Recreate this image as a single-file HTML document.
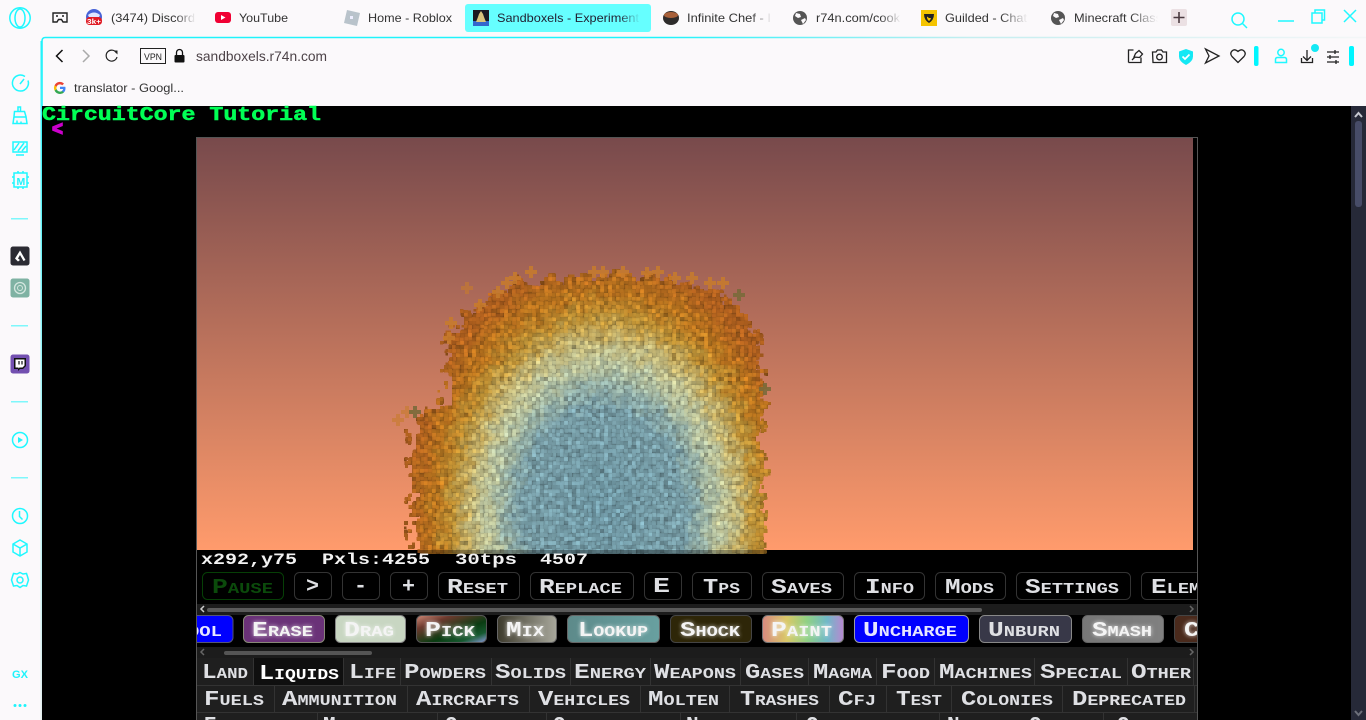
<!DOCTYPE html>
<html><head><meta charset="utf-8"><title>Sandboxels</title>
<style>
html,body{margin:0;padding:0;width:1366px;height:720px;overflow:hidden;background:#fbf9fb}
svg{display:block;position:absolute;left:0;top:0}
.t{font:12px "Liberation Sans",sans-serif;fill:#333}
.g{font-family:"Liberation Mono",monospace;font-weight:bold;font-size:21px;font-variant:small-caps;fill:#dfe0e4}
.w{fill:#f4f4f4;filter:drop-shadow(0 0 2px rgba(255,255,255,.75))}
.s{font-family:"Liberation Mono",monospace;font-weight:bold;font-size:16px;fill:#f2f2f2}
.c{fill:none;stroke:#1ff8ff;stroke-width:1.5}
.k{fill:none;stroke:#222;stroke-width:1.3}
.b{fill:#000;stroke:#333;stroke-width:1}
.d{fill:#333}
</style></head><body>
<svg width="1366" height="720" viewBox="0 0 1366 720" xmlns="http://www.w3.org/2000/svg">
<defs>
<linearGradient id="sky" x1="0" y1="0" x2="0" y2="1"><stop offset="0" stop-color="#784a4c"/><stop offset="1" stop-color="#ff9b6c"/></linearGradient>
<linearGradient id="top" x1="0" y1="0" x2="1" y2="0"><stop offset="0" stop-color="#1ff3fb"/><stop offset=".47" stop-color="#1ff3fb"/><stop offset=".7" stop-color="#c4eef0"/><stop offset="1" stop-color="#f4f6f7"/></linearGradient>
<linearGradient id="lft" x1="0" y1="0" x2="0" y2="1"><stop offset="0" stop-color="#1ff3fb"/><stop offset=".5" stop-color="#9ff3f6"/><stop offset="1" stop-color="#e4eeee"/></linearGradient>
<linearGradient id="f"><stop offset="0" stop-color="#fbf9fb" stop-opacity="0"/><stop offset="1" stop-color="#fbf9fb"/></linearGradient>
<linearGradient id="fa"><stop offset="0" stop-color="#66ffff" stop-opacity="0"/><stop offset="1" stop-color="#66ffff"/></linearGradient>
<linearGradient id="pick" x1="0" y1="0" x2="1" y2="1"><stop offset="0" stop-color="#d08a78"/><stop offset=".25" stop-color="#6d3a2e"/><stop offset=".6" stop-color="#0a3c12"/><stop offset=".8" stop-color="#165a30"/><stop offset="1" stop-color="#8f9be0"/></linearGradient>
<linearGradient id="mix"><stop offset="0" stop-color="#3d3a2c"/><stop offset="1" stop-color="#a8a89c"/></linearGradient>
<linearGradient id="lk"><stop offset="0" stop-color="#5d8a8a"/><stop offset="1" stop-color="#68a0a0"/></linearGradient>
<linearGradient id="paint" x1="0" y1="0" x2="1" y2="0"><stop offset="0" stop-color="#d88a80"/><stop offset=".3" stop-color="#d9c868"/><stop offset=".55" stop-color="#8fd084"/><stop offset=".8" stop-color="#70b8c8"/><stop offset="1" stop-color="#b888d0"/></linearGradient>
<linearGradient id="sm"><stop offset="0" stop-color="#777"/><stop offset="1" stop-color="#808080"/></linearGradient>
<radialGradient id="bg" gradientUnits="userSpaceOnUse" cx="0" cy="0" r="1" gradientTransform="translate(604 512) scale(195 250)">
<stop offset="0" stop-color="#78a4b2"/><stop offset=".42" stop-color="#80a8b2"/><stop offset=".5" stop-color="#9cb9b0"/><stop offset=".6" stop-color="#c9d1a6"/><stop offset=".68" stop-color="#cfc27e"/><stop offset=".78" stop-color="#c99a38"/><stop offset=".88" stop-color="#c57c20"/><stop offset="1" stop-color="#bb6620"/></radialGradient>
<filter id="px" filterUnits="userSpaceOnUse" primitiveUnits="userSpaceOnUse" x="380" y="250" width="412" height="320" color-interpolation-filters="sRGB">
<feTurbulence type="fractalNoise" baseFrequency=".09" numOctaves="3" seed="4" result="t"/>
<feDisplacementMap in="SourceGraphic" in2="t" scale="30" xChannelSelector="R" yChannelSelector="G" result="d"/>
<feComponentTransfer in="d" result="d2"><feFuncA type="discrete" tableValues="0 1"/></feComponentTransfer>
<feTurbulence type="fractalNoise" baseFrequency=".22" numOctaves="2" seed="9"/>
<feColorMatrix values="1 0 0 0 0 1 0 0 0 0 1 0 0 0 0 0 0 0 0 1" result="n"/>
<feComposite in="d2" in2="n" operator="arithmetic" k1=".8" k2=".48" k3="0" k4="0" result="m"/>
<feFlood x="381" y="250" width="2" height="2" flood-color="#000"/>
<feComposite x="381" y="250" width="4" height="4"/>
<feTile x="380" y="250" width="412" height="320" result="a"/>
<feComposite in="m" in2="a" operator="in"/>
<feMorphology operator="dilate" radius="1"/>
</filter>
<clipPath id="cb"><rect x="197" y="138" width="996" height="416"/></clipPath>
<clipPath id="game"><rect x="197" y="100" width="1000" height="620"/></clipPath>
<path id="pl" d="M-2-6h4v4h4v4h-4v4h-4v-4h-4v-4h4z"/>
</defs>

<rect width="1366" height="720" fill="#fbf9fb"/>

<!-- window chrome left logo -->
<circle cx="20" cy="18" r="10.2" class="c"/><ellipse cx="20" cy="18" rx="5" ry="9" class="c"/>

<!-- tabs -->
<rect x="465" y="4" width="186" height="28" rx="3" fill="#66ffff"/>
<g fill="none" stroke="#222" stroke-width="1.4"><path d="M53 13h14v9h-4l-1.500-2.500h-3L57 22h-4z"/></g><circle cx="57" cy="16" r="1" fill="#222"/><circle cx="63" cy="16" r="1" fill="#222"/>
<circle cx="94" cy="17" r="8" fill="#4763d8"/><path d="M88 15q6-5 12 0l-1 2H89z" fill="#dfe5ff"/><rect x="86" y="17" width="16" height="8" rx="3.500" fill="#e01b24"/><text x="87" y="24" font-family="Liberation Sans" font-weight="bold" font-size="7.500" fill="#fff" textLength="14" lengthAdjust="spacingAndGlyphs">3k+</text>
<text class="t" x="111" y="22" textLength="84" lengthAdjust="spacingAndGlyphs">(3474) Discord</text><rect x="175" y="8" width="21" height="20" fill="url(#f)"/>
<rect x="215" y="12" width="16" height="11" rx="3" fill="#f00033"/><path d="M221 15l4.500 2.500-4.500 2.500z" fill="#fff"/>
<text class="t" x="239" y="22" textLength="49" lengthAdjust="spacingAndGlyphs">YouTube</text>
<path d="M347 10l13 3-3 13-13-3z" fill="#b9c3cb"/><rect x="350" y="16" width="3" height="3" fill="#eef"/>
<text class="t" x="368" y="22" textLength="84" lengthAdjust="spacingAndGlyphs">Home - Roblox</text>
<rect x="473" y="10" width="16" height="16" fill="#1a1a22"/><rect x="473" y="21" width="16" height="5" fill="#3366cc"/><path d="M481 11l2 3 1 3 2 5h-10l2-5 1-3z" fill="#d8c47c"/>
<text class="t" x="497" y="22" textLength="142" lengthAdjust="spacingAndGlyphs" style="fill:#223">Sandboxels - Experiment</text><rect x="619" y="8" width="21" height="20" fill="url(#fa)"/>
<ellipse cx="671" cy="18" rx="8" ry="7" fill="#2e2b2b"/><ellipse cx="671" cy="15" rx="7" ry="3" fill="#a8603a"/>
<text class="t" x="687" y="22" textLength="84" lengthAdjust="spacingAndGlyphs">Infinite Chef - I</text><rect x="751" y="8" width="21" height="20" fill="url(#f)"/>
<circle cx="800" cy="18" r="7" fill="#555"/><path d="M796 13l4 1 1 3-3 1-3-2zM801 20l4-2 1 2-3 4z" fill="#fbf9fb"/>
<text class="t" x="816" y="22" textLength="84" lengthAdjust="spacingAndGlyphs">r74n.com/cook</text><rect x="880" y="8" width="21" height="20" fill="url(#f)"/>
<rect x="921" y="10" width="16" height="16" fill="#f5c400"/><path d="M924 14h10q0 6-5 9-5-3-5-9zM927 16.500v1.500q.5 2 2 3 1.500-1 2-3h-2" fill="#222"/>
<text class="t" x="945" y="22" textLength="82" lengthAdjust="spacingAndGlyphs">Guilded - Chat</text><rect x="1000" y="8" width="28" height="20" fill="url(#f)"/>
<circle cx="1058" cy="18" r="7" fill="#555"/><path d="M1054 13l4 1 1 3-3 1-3-2zM1059 20l4-2 1 2-3 4z" fill="#fbf9fb"/>
<text class="t" x="1074" y="22" textLength="88" lengthAdjust="spacingAndGlyphs">Minecraft Class</text><rect x="1130" y="8" width="28" height="20" fill="url(#f)"/><rect x="1158" y="8" width="10" height="20" fill="#fbf9fb"/>
<rect x="1171" y="9" width="16" height="17" rx="2" fill="#ebe0e3"/><path d="M1179 12v11M1173.500 17.500h11" stroke="#4a3a40" stroke-width="1.600"/>
<circle cx="1238" cy="19" r="6" class="c"/><path d="M1242.500 23.500l4.500 4.500" class="c"/>
<path d="M1278 21h16" class="c"/>
<rect x="1312" y="13" width="10" height="10" class="c"/><path d="M1315 13v-3h9.500v10H1322" class="c"/>
<path d="M1344 10l12 12M1356 10l-12 12" class="c"/>

<!-- panel borders -->
<path d="M42 106V41q0-3.500 3.500-3.500H1366" fill="none" stroke="url(#top)" stroke-width="1.600"/>
<rect x="40.500" y="41" width="1.500" height="679" fill="url(#lft)"/>

<!-- address bar -->
<path d="M62.500 50l-6 6 6 6" fill="none" stroke="#111" stroke-width="1.500"/>
<path d="M83 50l6 6-6 6" fill="none" stroke="#aaa" stroke-width="1.500"/>
<path d="M116.500 53a5.500 5.500 0 1 0 .5 4" fill="none" stroke="#222" stroke-width="1.200"/><path d="M113.500 50.500h4v4z" fill="#222"/>
<rect x="140.500" y="48.500" width="25" height="15" fill="none" stroke="#222"/><text x="144" y="60" font-family="Liberation Sans" font-size="9.500" fill="#222" textLength="18" lengthAdjust="spacingAndGlyphs">VPN</text>
<rect x="174.500" y="55" width="10" height="7.500" rx="1" fill="#111"/><path d="M176.500 55v-2.500a3 3 0 0 1 6 0V55" fill="none" stroke="#111" stroke-width="1.300"/>
<text x="196" y="61" font-family="Liberation Sans" font-size="14" fill="#4d4348" textLength="131" lengthAdjust="spacingAndGlyphs">sandboxels.r74n.com</text>

<!-- right toolbar -->
<path class="k" d="M1128.500 62.500V50h5M1128.500 62.500h12.500v-5"/><path class="k" d="M1134 57l1.500-3.500 3.500-3 3.500 3.500-3 3.500zM1132 60l3-3"/>
<path class="k" d="M1152.500 52h3.500l1.500-2h4l1.500 2h3.500v10.500h-13.500z"/><circle cx="1159.500" cy="57" r="2.800" class="k"/>
<path d="M1186 49l7 2.500v5q0 5-7 8.500-7-3.500-7-8.500v-5z" fill="#14e8f4"/><path d="M1182.500 56.500l2.500 2.500 4.500-4.500" fill="none" stroke="#fff" stroke-width="1.700"/>
<path class="k" d="M1205.500 49l13.500 7-13.500 7 3.500-7z"/>
<path class="k" d="M1238 62.500l-6-6q-2.500-3 0-5.500t6 .5q3.500-3 6-.5t0 5.500z"/>
<rect x="1254" y="46" width="4.500" height="20" rx="2" fill="#00f6ff"/>
<circle cx="1281" cy="52.500" r="3.200" class="c"/><path class="c" d="M1275.500 62.500v-3q0-2 2-2h7q2 0 2 2v3z"/>
<path class="k" d="M1307 50v10M1303 56.500l4 4 4-4M1301.500 58v4.500h11V58"/>
<circle cx="1315" cy="48" r="4" fill="#14e8f4"/>
<path class="k" d="M1327 52h12M1327 57h12M1327 62h12"/><path d="M1335 50v4M1330 55v4M1336 60v4" stroke="#222" stroke-width="1.300"/>
<rect x="1349" y="46" width="5" height="20" rx="2" fill="#00f6ff"/>

<!-- bookmark -->
<path d="M65.500 88a6 6 0 0 0-.2-1.300H60v2.300h3.200a3 3 0 0 1-1.200 1.800v1.500h2a5.800 5.800 0 0 0 1.500-4.300z" fill="#4285f4"/><path d="M60 94a5.800 5.800 0 0 0 4-1.500l-2-1.500a3.600 3.600 0 0 1-5.400-1.900h-2v1.500A6 6 0 0 0 60 94z" fill="#34a853"/><path d="M56.600 89.100a3.600 3.600 0 0 1 0-2.300v-1.500h-2a6 6 0 0 0 0 5.300z" fill="#fbbc05"/><path d="M60 84.400a3.300 3.300 0 0 1 2.300.9l1.700-1.700A5.800 5.800 0 0 0 54.600 85.300l2 1.500A3.600 3.600 0 0 1 60 84.400z" fill="#ea4335"/>
<text class="t" x="74" y="92" textLength="110" lengthAdjust="spacingAndGlyphs">translator - Googl...</text>

<!-- sidebar -->
<path class="c" d="M25 76.500a8 8 0 1 0 3 4M20 84l4-5"/>
<path class="c" d="M18 111v-4h2.500v4M14.500 111.500h10l1.500 5 1 7H13l1-7zM14 117h12M17 123.500v-3M21 123.500v-2"/>
<rect x="13" y="142" width="14" height="10" class="c"/><path d="M14 150l5-7M18 151l6-8M22 151l4-5" class="c" stroke-width="1"/><path class="c" d="M16 155h8"/>
<rect x="14" y="173" width="13" height="14" class="c"/><text x="16.500" y="185" font-family="Liberation Sans" font-weight="bold" font-size="10.500" fill="#1ff3fb">M</text><path class="c" d="M12 177h2M12 183h2M27 177h2M27 183h2M18 171v2M23 171v2M18 187v2M23 187v2" stroke-width="1"/>
<rect x="11" y="218" width="17" height="1.500" fill="#7ef7fb"/>
<rect x="10.500" y="246.500" width="19" height="19" rx="2.500" fill="#2b2b33"/><path d="M20 250.500l5.500 9.500-2 1-3.500-6-2 3.500 2 1.500-2 1.500-3-3z" fill="#fff"/>
<rect x="10.500" y="278.500" width="19" height="19" rx="2.500" fill="#7fb2a3"/><circle cx="20" cy="288" r="5.500" fill="none" stroke="#d4e6df" stroke-width="1.300"/><circle cx="20" cy="288" r="2.500" fill="none" stroke="#d4e6df"/>
<rect x="11" y="325" width="17" height="1.500" fill="#7ef7fb"/>
<rect x="10.500" y="354.500" width="19" height="19" rx="2.500" fill="#7350b0"/><path d="M14 358h12v8l-3 3h-3l-2 2v-2h-4z" fill="#111"/><path d="M15.500 359.500h9v6l-2 2h-3l-1 1v-1h-3z" fill="#fff"/><path d="M19 361v3.500M22 361v3.500" stroke="#111" stroke-width="1.200"/>
<rect x="11" y="401" width="17" height="1.500" fill="#7ef7fb"/>
<circle cx="20" cy="440" r="7.500" class="c"/><path d="M18 437l5 3-5 3z" fill="#1ff3fb"/>
<rect x="11" y="477" width="17" height="1.500" fill="#7ef7fb"/>
<circle cx="20" cy="516" r="7.500" class="c"/><path class="c" d="M19.500 511v5.500l3 3"/>
<path class="c" d="M20 540l7 4v8l-7 4-7-4v-8zM13 544l7 4 7-4M20 548v8"/>
<path class="c" d="M20 572.500l3 1.500 3.500-.5 1 3 1 3.500-1 3-1 3-3.500-.5-3 2-3-2-3.500.5-1-3-1-3 1-3.500 1-3 3.500.5z"/><circle cx="20" cy="580" r="3" class="c"/>
<text x="12" y="678" font-family="Liberation Sans" font-weight="bold" font-size="11" fill="#1ff3fb" textLength="16" lengthAdjust="spacingAndGlyphs">GX</text>
<circle cx="15" cy="705.500" r="1.500" fill="#1ff3fb"/><circle cx="20" cy="705.500" r="1.500" fill="#1ff3fb"/><circle cx="25" cy="705.500" r="1.500" fill="#1ff3fb"/>

<!-- page -->
<rect x="42" y="106" width="1324" height="614" fill="#000"/>
<text x="42" y="120" font-family="Liberation Mono" font-weight="bold" font-size="19" fill="#00ff55" textLength="279" lengthAdjust="spacingAndGlyphs" stroke="#00ff55" stroke-width=".5">CircuitCore Tutorial</text>
<text x="52" y="135" font-family="Liberation Mono" font-weight="bold" font-size="19" fill="#cc00cc" stroke="#cc00cc" stroke-width="1.500" textLength="11" lengthAdjust="spacingAndGlyphs">&lt;</text>

<!-- scrollbar -->
<rect x="1351" y="106" width="15" height="614" fill="#262938"/>
<rect x="1355" y="121" width="7" height="86" rx="3" fill="#474c68"/>
<path d="M1355 117l3.500-4 3.500 4" fill="none" stroke="#c6c8d0" stroke-width="2"/>
<path d="M1355 711l3.500 4 3.500-4" fill="none" stroke="#6c6f7a" stroke-width="2"/>

<!-- canvas -->
<rect x="196.500" y="137.500" width="1001" height="590" fill="none" stroke="#555"/>
<rect x="197" y="138" width="996" height="412" fill="url(#sky)"/>
<g clip-path="url(#cb)">
<g filter="url(#px)"><path d="M412 640V432Q425 412 447 398L447 345Q458 312 492 296Q540 272 600 276Q680 272 722 296Q752 312 760 345L764 400V640Z" fill="url(#bg)"/></g>
<g fill="#c87c2c" opacity=".85">
<use href="#pl" x="531" y="272"/><use href="#pl" x="467" y="288" opacity=".7"/><use href="#pl" x="451" y="323"/><use href="#pl" x="449" y="338"/><use href="#pl" x="594" y="272"/><use href="#pl" x="603" y="272"/><use href="#pl" x="623" y="272"/><use href="#pl" x="647" y="273"/><use href="#pl" x="658" y="272"/><use href="#pl" x="398" y="420" opacity=".7"/><use href="#pl" x="407" y="412" opacity=".7"/><use href="#pl" x="692" y="278"/><use href="#pl" x="675" y="278"/><use href="#pl" x="723" y="283"/><use href="#pl" x="710" y="283"/><use href="#pl" x="515" y="278"/><use href="#pl" x="507" y="283"/><use href="#pl" x="498" y="292"/><use href="#pl" x="480" y="305"/>
</g>
<g fill="#7a6a3a" opacity=".9"><use href="#pl" x="739" y="295"/><use href="#pl" x="765" y="389"/><use href="#pl" x="415" y="412"/></g>
</g>
<rect x="197" y="550" width="996" height="4" fill="#000" opacity=".35"/>

<!-- stats -->
<text class="s" x="201" y="564" textLength="96" lengthAdjust="spacingAndGlyphs">x292,y75</text>
<text class="s" x="322" y="564" textLength="108" lengthAdjust="spacingAndGlyphs">Pxls:4255</text>
<text class="s" x="455" y="564" textLength="62" lengthAdjust="spacingAndGlyphs">30tps</text>
<text class="s" x="540" y="564" textLength="48" lengthAdjust="spacingAndGlyphs">4507</text>

<g clip-path="url(#game)">
<!-- control row -->
<rect class="b" x="202.500" y="572.500" width="81" height="27" rx="5" style="stroke:#063f06"/>
<rect class="b" x="294.500" y="572.500" width="37" height="27" rx="5"/><rect class="b" x="342.500" y="572.500" width="37" height="27" rx="5"/><rect class="b" x="390.500" y="572.500" width="37" height="27" rx="5"/><rect class="b" x="438.500" y="572.500" width="81" height="27" rx="5"/><rect class="b" x="530.500" y="572.500" width="103" height="27" rx="5"/><rect class="b" x="644.500" y="572.500" width="37" height="27" rx="5"/><rect class="b" x="692.500" y="572.500" width="59" height="27" rx="5"/><rect class="b" x="762.500" y="572.500" width="81" height="27" rx="5"/><rect class="b" x="854.500" y="572.500" width="70" height="27" rx="5"/><rect class="b" x="935.500" y="572.500" width="70" height="27" rx="5"/><rect class="b" x="1016.500" y="572.500" width="114" height="27" rx="5"/><rect class="b" x="1141.500" y="572.500" width="114" height="27" rx="5"/>
<g>
<text class="g" x="212" y="593" textLength="61" lengthAdjust="spacingAndGlyphs" style="fill:#0b4a0b">Pause</text>
<text class="g" x="306" y="592" textLength="13" lengthAdjust="spacingAndGlyphs">&gt;</text>
<text class="g" x="354" y="592" textLength="13" lengthAdjust="spacingAndGlyphs">-</text>
<text class="g" x="402" y="592" textLength="13" lengthAdjust="spacingAndGlyphs">+</text>
<text class="g" x="447" y="593" textLength="61" lengthAdjust="spacingAndGlyphs">Reset</text>
<text class="g" x="539" y="593" textLength="83" lengthAdjust="spacingAndGlyphs">Replace</text>
<text class="g" x="653" y="592" textLength="17" lengthAdjust="spacingAndGlyphs">E</text>
<text class="g" x="703" y="593" textLength="37" lengthAdjust="spacingAndGlyphs">Tps</text>
<text class="g" x="771" y="593" textLength="61" lengthAdjust="spacingAndGlyphs">Saves</text>
<text class="g" x="865" y="593" textLength="49" lengthAdjust="spacingAndGlyphs">Info</text>
<text class="g" x="945" y="593" textLength="49" lengthAdjust="spacingAndGlyphs">Mods</text>
<text class="g" x="1025" y="593" textLength="94" lengthAdjust="spacingAndGlyphs">Settings</text>
<text class="g" x="1151" y="593" textLength="94" lengthAdjust="spacingAndGlyphs">Elements</text>
</g>
<!-- scroll 1 -->
<rect x="197" y="604" width="1000" height="11" fill="#1c1c1c"/>
<rect x="207" y="608" width="775" height="4" rx="2" fill="#5a5a5a"/>
<path d="M204 606l-3 3 3 3" fill="none" stroke="#ccc" stroke-width="1.500"/><path d="M1190 606l3 3-3 3" fill="none" stroke="#666" stroke-width="1.500"/>
<!-- tools -->
<rect x="150" y="615.500" width="83" height="27" rx="5" fill="#0000ff" stroke="#557"/>
<rect x="243.500" y="615.500" width="81" height="27" rx="5" fill="#6a3278" stroke="#887"/>
<rect x="335.500" y="615.500" width="70" height="27" rx="5" fill="#c8d6c2" stroke="#888"/>
<rect x="416.500" y="615.500" width="70" height="27" rx="5" fill="url(#pick)" stroke="#555"/>
<rect x="497.500" y="615.500" width="59" height="27" rx="5" fill="url(#mix)" stroke="#666"/>
<rect x="567.500" y="615.500" width="92" height="27" rx="5" fill="url(#lk)" stroke="#666"/>
<rect x="670.500" y="615.500" width="81" height="27" rx="5" fill="#2e2608" stroke="#444"/>
<rect x="762.500" y="615.500" width="81" height="27" rx="5" fill="url(#paint)" stroke="#777"/>
<rect x="854.500" y="615.500" width="114" height="27" rx="5" fill="#0000ff" stroke="#99a"/>
<rect x="979.500" y="615.500" width="92" height="27" rx="5" fill="#383848" stroke="#888"/>
<rect x="1082.500" y="615.500" width="81" height="27" rx="5" fill="url(#sm)" stroke="#666"/>
<rect x="1174.500" y="615.500" width="70" height="27" rx="5" fill="#4a2a1c" stroke="#444"/>
<text class="g" x="172" y="636" textLength="50" lengthAdjust="spacingAndGlyphs" style="fill:#e8e8ff">Tool</text>
<text class="g w" x="252" y="636" textLength="61" lengthAdjust="spacingAndGlyphs">Erase</text>
<text class="g w" x="344" y="636" textLength="50" lengthAdjust="spacingAndGlyphs">Drag</text>
<text class="g w" x="425" y="636" textLength="50" lengthAdjust="spacingAndGlyphs">Pick</text>
<text class="g w" x="506" y="636" textLength="38" lengthAdjust="spacingAndGlyphs">Mix</text>
<text class="g w" x="578" y="636" textLength="70" lengthAdjust="spacingAndGlyphs">Lookup</text>
<text class="g w" x="680" y="636" textLength="60" lengthAdjust="spacingAndGlyphs">Shock</text>
<text class="g w" x="771" y="636" textLength="61" lengthAdjust="spacingAndGlyphs">Paint</text>
<text class="g" x="863" y="636" textLength="94" lengthAdjust="spacingAndGlyphs" style="fill:#e6e6ff">Uncharge</text>
<text class="g" x="988" y="636" textLength="72" lengthAdjust="spacingAndGlyphs">Unburn</text>
<text class="g w" x="1092" y="636" textLength="60" lengthAdjust="spacingAndGlyphs">Smash</text>
<text class="g w" x="1184" y="636" textLength="60" lengthAdjust="spacingAndGlyphs">Clone</text>
<!-- scroll 2 -->
<rect x="197" y="647" width="1000" height="11" fill="#1c1c1c"/>
<rect x="224" y="651" width="148" height="4" rx="2" fill="#555"/>
<path d="M204 649l-3 3 3 3" fill="none" stroke="#666" stroke-width="1.500"/><path d="M1190 649l3 3-3 3" fill="none" stroke="#666" stroke-width="1.500"/>
<!-- categories -->
<rect x="197" y="658" width="1000" height="62" fill="#1f1f1f"/>
<rect x="254" y="658" width="90" height="27" fill="#0f0f0f"/>
<g class="d">
<rect x="253" y="658" width="1" height="27"/><rect x="343" y="658" width="1" height="27"/><rect x="400" y="658" width="1" height="27"/><rect x="491" y="658" width="1" height="27"/><rect x="570" y="658" width="1" height="27"/><rect x="650" y="658" width="1" height="27"/><rect x="740" y="658" width="1" height="27"/><rect x="808" y="658" width="1" height="27"/><rect x="876" y="658" width="1" height="27"/><rect x="934" y="658" width="1" height="27"/><rect x="1034" y="658" width="1" height="27"/><rect x="1127" y="658" width="1" height="27"/><rect x="1193" y="658" width="1" height="27"/>
<rect x="197" y="685" width="1000" height="1"/>
<rect x="274" y="686" width="1" height="26"/><rect x="407" y="686" width="1" height="26"/><rect x="529" y="686" width="1" height="26"/><rect x="640" y="686" width="1" height="26"/><rect x="729" y="686" width="1" height="26"/><rect x="829" y="686" width="1" height="26"/><rect x="886" y="686" width="1" height="26"/><rect x="951" y="686" width="1" height="26"/><rect x="1062" y="686" width="1" height="26"/><rect x="1194" y="686" width="1" height="26"/>
<rect x="197" y="712" width="1000" height="1"/>
<rect x="317" y="713" width="1" height="7"/><rect x="437" y="713" width="1" height="7"/><rect x="546" y="713" width="1" height="7"/><rect x="680" y="713" width="1" height="7"/><rect x="796" y="713" width="1" height="7"/><rect x="939" y="713" width="1" height="7"/><rect x="1103" y="713" width="1" height="7"/>
</g>
<text class="g" x="202" y="678" textLength="46" lengthAdjust="spacingAndGlyphs">Land</text>
<text class="g" x="259" y="679" textLength="80" lengthAdjust="spacingAndGlyphs" style="fill:#fff">Liquids</text>
<text class="g" x="349" y="678" textLength="47" lengthAdjust="spacingAndGlyphs">Life</text>
<text class="g" x="404" y="678" textLength="82" lengthAdjust="spacingAndGlyphs">Powders</text>
<text class="g" x="495" y="678" textLength="71" lengthAdjust="spacingAndGlyphs">Solids</text>
<text class="g" x="574" y="678" textLength="72" lengthAdjust="spacingAndGlyphs">Energy</text>
<text class="g" x="654" y="678" textLength="82" lengthAdjust="spacingAndGlyphs">Weapons</text>
<text class="g" x="745" y="678" textLength="59" lengthAdjust="spacingAndGlyphs">Gases</text>
<text class="g" x="813" y="678" textLength="59" lengthAdjust="spacingAndGlyphs">Magma</text>
<text class="g" x="881" y="678" textLength="49" lengthAdjust="spacingAndGlyphs">Food</text>
<text class="g" x="939" y="678" textLength="93" lengthAdjust="spacingAndGlyphs">Machines</text>
<text class="g" x="1040" y="678" textLength="82" lengthAdjust="spacingAndGlyphs">Special</text>
<text class="g" x="1131" y="678" textLength="60" lengthAdjust="spacingAndGlyphs">Other</text>
<text class="g" x="204" y="705" textLength="60" lengthAdjust="spacingAndGlyphs">Fuels</text>
<text class="g" x="282" y="705" textLength="115" lengthAdjust="spacingAndGlyphs">Ammunition</text>
<text class="g" x="416" y="705" textLength="103" lengthAdjust="spacingAndGlyphs">Aircrafts</text>
<text class="g" x="538" y="705" textLength="92" lengthAdjust="spacingAndGlyphs">Vehicles</text>
<text class="g" x="648" y="705" textLength="71" lengthAdjust="spacingAndGlyphs">Molten</text>
<text class="g" x="740" y="705" textLength="79" lengthAdjust="spacingAndGlyphs">Trashes</text>
<text class="g" x="838" y="705" textLength="38" lengthAdjust="spacingAndGlyphs">Cfj</text>
<text class="g" x="896" y="705" textLength="46" lengthAdjust="spacingAndGlyphs">Test</text>
<text class="g" x="961" y="705" textLength="92" lengthAdjust="spacingAndGlyphs">Colonies</text>
<text class="g" x="1072" y="705" textLength="114" lengthAdjust="spacingAndGlyphs">Deprecated</text>
<text class="g" x="204" y="731">E</text><text class="g" x="323" y="731">M</text><text class="g" x="445" y="731">O</text><text class="g" x="553" y="731">O</text><text class="g" x="686" y="731">N</text><text class="g" x="806" y="731">O</text><text class="g" x="947" y="731">N</text><text class="g" x="1029" y="731">O</text><text class="g" x="1117" y="731">O</text>
</g>
</svg>
</body></html>
